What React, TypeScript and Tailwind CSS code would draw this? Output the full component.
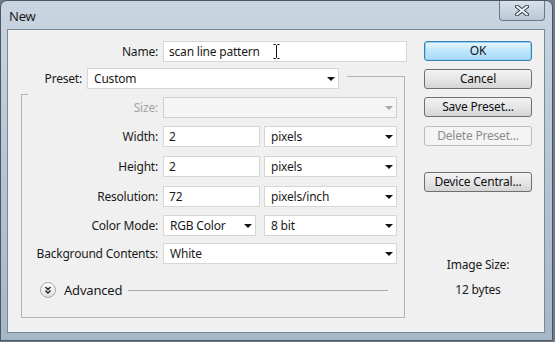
const font = { fontFamily: '"Noto Sans", "Open Sans", sans-serif' };

function Arrow({ disabled = false }: { disabled?: boolean }) {
  return (
    <svg width="8" height="4" viewBox="0 0 8 4" className="shrink-0">
      <path d="M0 0H8L4 4Z" fill={disabled ? "#a8a8a8" : "#111"} />
    </svg>
  );
}

function Field({ w, value }: { w: string; value: string }) {
  return (
    <div className={`${w} h-[21px] shrink-0 border border-[#d6d6d6] bg-white pl-[5px] flex items-center text-[#1a1a1a]`}>
      {value}
    </div>
  );
}

function Select({ w, value, disabled = false }: { w: string; value?: string; disabled?: boolean }) {
  return (
    <div
      className={`${w} h-[21px] shrink-0 border flex items-center justify-between pl-[6px] pr-[3px] ${
        disabled ? "border-[#cfcfcf] bg-[#f5f5f5]" : "border-[#d6d6d6] bg-white text-[#1a1a1a]"
      }`}
    >
      <span>{value}</span>
      <Arrow disabled={disabled} />
    </div>
  );
}

function Label({ w, text, disabled = false }: { w: string; text: string; disabled?: boolean }) {
  return (
    <span className={`${w} shrink-0 text-right ${disabled ? "text-[#a3a3a3]" : "text-[#1a1a1a]"}`}>{text}</span>
  );
}

function Button({ text, primary = false, disabled = false }: { text: string; primary?: boolean; disabled?: boolean }) {
  let cls = "border-[#707070] bg-gradient-to-b from-[#f3f3f3] via-[#e6e6e6] to-[#d4d4d4] text-[#111]";
  if (primary) cls = "border-[#3c7fb1] bg-gradient-to-b from-[#eaf6fd] via-[#bee6fd] to-[#a7d9f5] text-[#111] shadow-[inset_0_0_0_1px_#8fd3f5]";
  if (disabled) cls = "border-[#b8bcbf] bg-[#f4f4f4] text-[#8d8d8d]";
  return (
    <div className={`w-[108px] h-[20px] rounded-[3px] border flex items-center justify-center ${cls}`}>{text}</div>
  );
}

export default function App() {
  return (
    <div className="w-[555px] h-[342px] bg-[#6f7b87] text-[12px] leading-none tracking-[-0.2px]" style={font}>
      <div className="w-[553px] h-[341px] rounded-t-[7px] border border-[#4c5764] bg-gradient-to-b from-[#c9d5e1] via-[#b6c5d4] to-[#a6b7c8] flex flex-col">
        {/* title bar */}
        <div className="h-[28px] flex items-start justify-between">
          <span className="pl-[8px] pt-[9px] text-[13px] text-[#1b1b1b]">New</span>
          <div className="mr-[7px] w-[46px] h-[20px] rounded-b-[4px] border border-t-0 border-[#6d7987] bg-gradient-to-b from-[#d8e1ea] to-[#b9c7d5] flex items-center justify-center">
            <svg width="14" height="11" viewBox="0 0 14 11">
              <path d="M2 1.5L12 9.5M12 1.5L2 9.5" stroke="#3a4350" strokeWidth="4" strokeLinecap="round" />
              <path d="M2 1.5L12 9.5M12 1.5L2 9.5" stroke="#f4f6f8" strokeWidth="2" strokeLinecap="round" />
            </svg>
          </div>
        </div>

        {/* client area */}
        <div className="ml-[6px] w-[538px] h-[304px] border border-[#7a8898] bg-[#f0f0f0] flex">
          {/* left form column */}
          <div className="w-[399px] shrink-0 flex flex-col">
            <div className="mt-[11px] flex items-center">
              <Label w="w-[150px]" text="Name:" />
              <div className="relative ml-[5px]">
                <Field w="w-[244px]" value="scan line pattern" />
                <svg width="7" height="15" viewBox="0 0 7 15" className="absolute left-[110px] top-[3px]">
                  <path d="M0.5 0.5H2.5L3.5 1.5L4.5 0.5H6.5M3.5 1.5V13.5M0.5 14.5H2.5L3.5 13.5L4.5 14.5H6.5" stroke="#111" fill="none" />
                </svg>
              </div>
            </div>

            {/* Preset group box */}
            <div className="relative mt-[6px] ml-[13px] w-[384px] h-[250px]">
              <div className="absolute left-0 right-0 top-[8px] bottom-0 border-r border-b border-[#b4b4b4]" />
              <div className="absolute right-0 top-[8px] w-[58px] border-t border-[#b4b4b4]" />
              <div className="absolute left-0 top-[26px] bottom-0 w-[7px] border-l border-t border-[#b4b4b4]" />

              <div className="relative flex flex-col">
                <div className="flex items-center">
                  <Label w="w-[61px]" text="Preset:" />
                  <div className="ml-[5px]">
                    <Select w="w-[252px]" value="Custom" />
                  </div>
                </div>
                <div className="mt-[8px] flex items-center">
                  <Label w="w-[137px]" text="Size:" disabled />
                  <div className="ml-[5px]">
                    <Select w="w-[234px]" disabled />
                  </div>
                </div>
                <div className="mt-[8px] flex items-center gap-[4px]">
                  <Label w="w-[137px]" text="Width:" />
                  <div className="ml-[1px] flex gap-[4px]">
                    <Field w="w-[97px]" value="2" />
                    <Select w="w-[133px]" value="pixels" />
                  </div>
                </div>
                <div className="mt-[9px] flex items-center gap-[4px]">
                  <Label w="w-[137px]" text="Height:" />
                  <div className="ml-[1px] flex gap-[4px]">
                    <Field w="w-[97px]" value="2" />
                    <Select w="w-[133px]" value="pixels" />
                  </div>
                </div>
                <div className="mt-[9px] flex items-center gap-[4px]">
                  <Label w="w-[137px]" text="Resolution:" />
                  <div className="ml-[1px] flex gap-[4px]">
                    <Field w="w-[97px]" value="72" />
                    <Select w="w-[133px]" value="pixels/inch" />
                  </div>
                </div>
                <div className="mt-[8px] flex items-center">
                  <Label w="w-[137px]" text="Color Mode:" />
                  <div className="ml-[5px] flex gap-[8px]">
                    <Select w="w-[93px]" value="RGB Color" />
                    <Select w="w-[133px]" value="8 bit" />
                  </div>
                </div>
                <div className="mt-[7px] flex items-center">
                  <Label w="w-[137px]" text="Background Contents:" />
                  <div className="ml-[5px]">
                    <Select w="w-[234px]" value="White" />
                  </div>
                </div>
                <div className="mt-[18px] pl-[19px] pr-[17px] flex items-center">
                  <svg width="16" height="16" viewBox="0 0 16 16" className="shrink-0">
                    <defs>
                      <linearGradient id="adv" x1="0" y1="0" x2="0" y2="1">
                        <stop offset="0" stopColor="#ffffff" />
                        <stop offset="1" stopColor="#dedede" />
                      </linearGradient>
                    </defs>
                    <circle cx="8" cy="8" r="7.5" fill="url(#adv)" stroke="#a9a9a9" />
                    <path d="M5.5 5L8 7.5L10.5 5M5.5 8.5L8 11L10.5 8.5" stroke="#222" strokeWidth="1.4" fill="none" />
                  </svg>
                  <span className="ml-[8px] text-[13px] text-[#1a1a1a]">Advanced</span>
                  <div className="ml-[6px] flex-1 border-t border-[#a9a9a9]" />
                </div>
              </div>
            </div>
          </div>

          {/* right buttons column */}
          <div className="ml-[17px] flex flex-col items-center">
            <div className="mt-[11px]">
              <Button text="OK" primary />
            </div>
            <div className="mt-[8px]">
              <Button text="Cancel" />
            </div>
            <div className="mt-[8px]">
              <Button text="Save Preset..." />
            </div>
            <div className="mt-[9px]">
              <Button text="Delete Preset..." disabled />
            </div>
            <div className="mt-[26px]">
              <Button text="Device Central..." />
            </div>
            <span className="mt-[67px] text-[#1a1a1a]">Image Size:</span>
            <span className="mt-[13px] text-[#1a1a1a]">12 bytes</span>
          </div>
        </div>
      </div>
    </div>
  );
}
